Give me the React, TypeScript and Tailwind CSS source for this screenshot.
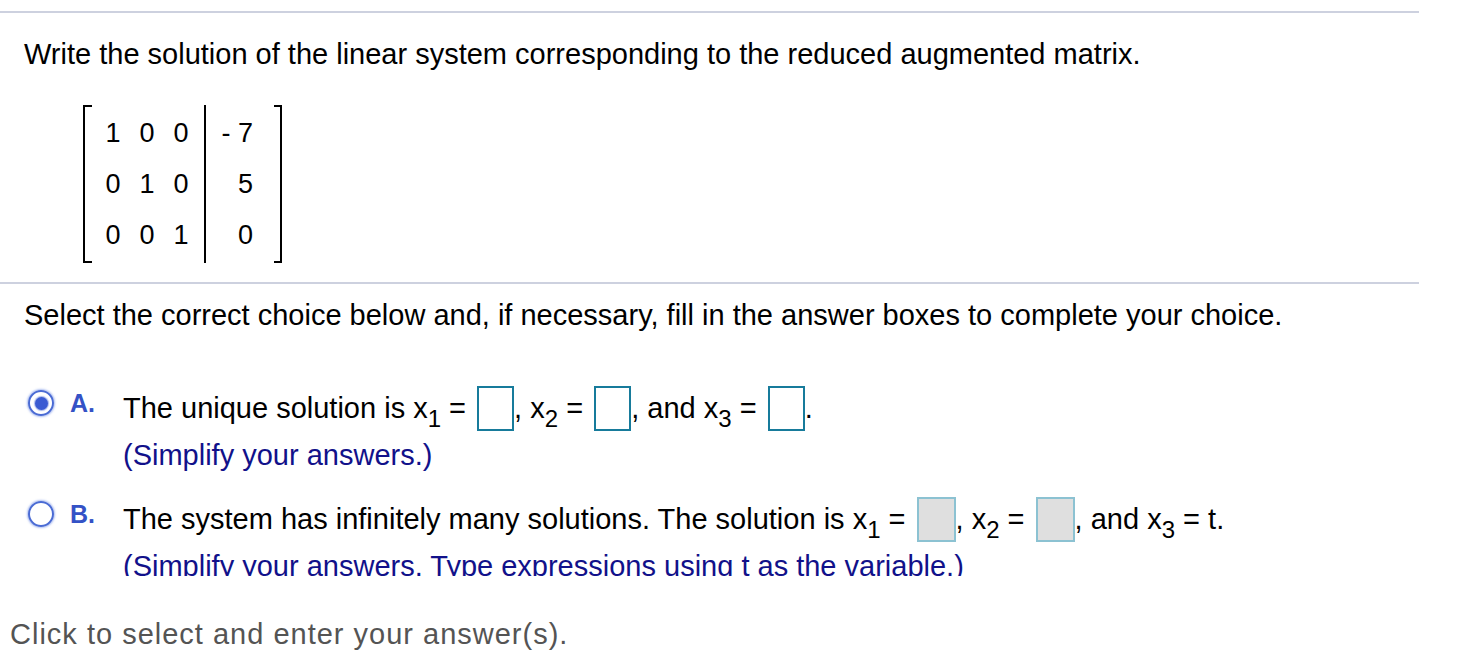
import React from 'react'

const matrix = [
  ['1', '0', '0', '- 7'],
  ['0', '1', '0', '5'],
  ['0', '0', '1', '0'],
]

function Radio({ checked }: { checked: boolean }) {
  return (
    <div className="ml-[28px] mt-[4px] flex h-[26px] w-[26px] shrink-0 items-center justify-center rounded-full border-2 border-[#4a6bd4] shadow-[0_0_2px_1px_rgba(110,140,230,0.55)]">
      {checked && <div className="h-[13px] w-[13px] rounded-full bg-[#3b5bd2] shadow-[0_0_1px_1px_rgba(80,110,220,0.5)]" />}
    </div>
  )
}

function Sub({ n }: { n: string }) {
  return <span className="align-[-9px] text-[24px] leading-none">{n}</span>
}

function Box({ disabled }: { disabled?: boolean }) {
  return disabled ? (
    <span className="ml-[3px] inline-block h-[45px] w-[39px] align-[-13px] border-2 border-[#8cc2d2] bg-[#dfdfdf]" />
  ) : (
    <span className="ml-[3px] inline-block h-[45px] w-[37px] align-[-13px] border-2 border-[#177b9b] bg-white" />
  )
}

export default function App() {
  return (
    <div className="h-[656px] w-[1460px] overflow-hidden bg-white font-['Liberation_Sans',Arial,sans-serif] text-black">
      <div className="h-[576px] w-[1419px] overflow-hidden pt-[11px]">
        <div className="h-[2px] bg-[#cdd1df]" />

        {/* Question */}
        <p className="ml-[24px] mt-[27px] text-[29px] leading-none">
          Write the solution of the linear system corresponding to the reduced augmented matrix.
        </p>

        {/* Augmented matrix */}
        <div className="ml-[83px] mt-[36px] flex h-[158px] text-[27px] leading-none">
          <div className="w-[9px] border-y-2 border-l-2 border-black" />
          <div className="grid grid-cols-[34px_34px_34px] grid-rows-[51px_51px_51px] pl-[4px] pr-[6px] pt-[3px]">
            {matrix.map((row, r) =>
              row.slice(0, 3).map((v, c) => (
                <div key={`${r}-${c}`} className="flex items-center justify-center">
                  {v}
                </div>
              ))
            )}
          </div>
          <div className="w-[2px] bg-black" />
          <div className="grid w-[68px] grid-rows-[51px_51px_51px] pr-[21px] pt-[3px]">
            {matrix.map((row, r) => (
              <div key={r} className="flex items-center justify-end whitespace-pre">
                {row[3]}
              </div>
            ))}
          </div>
          <div className="w-[8px] border-y-2 border-r-2 border-black" />
        </div>

        <div className="mt-[19px] h-[2px] bg-[#cdd1df]" />

        <p className="ml-[24px] mt-[17px] text-[29px] leading-none">
          Select the correct choice below and, if necessary, fill in the answer boxes to complete your choice.
        </p>

        {/* Choice A */}
        <div className="mt-[56px] flex items-start">
          <Radio checked />
          <div className="ml-[16px] mt-[5px] w-[53px] shrink-0 text-[25px] font-bold leading-none text-[#3452c6]">A.</div>
          <div className="text-[29px]">
            <div className="leading-[45px]">
              The unique solution is x<Sub n="1" /> = <Box />, x<Sub n="2" /> = <Box />, and x<Sub n="3" /> = <Box />.
            </div>
            <div className="mt-[10px] leading-none text-[#11118a]">(Simplify your answers.)</div>
          </div>
        </div>

        {/* Choice B */}
        <div className="mt-[27px] flex items-start">
          <Radio checked={false} />
          <div className="ml-[16px] mt-[5px] w-[53px] shrink-0 text-[25px] font-bold leading-none text-[#3452c6]">B.</div>
          <div className="text-[29px]">
            <div className="leading-[45px]">
              The system has infinitely many solutions. The solution is x<Sub n="1" /> = <Box disabled />, x
              <Sub n="2" /> = <Box disabled />, and x<Sub n="3" /> = t.
            </div>
            <div className="mt-[10px] leading-none text-[#11118a]">
              (Simplify your answers. Type expressions using t as the variable.)
            </div>
          </div>
        </div>
      </div>

      <p className="ml-[10px] pt-[44px] text-[29px] leading-none tracking-[1px] text-[#545454]">
        Click to select and enter your answer(s).
      </p>
    </div>
  )
}
